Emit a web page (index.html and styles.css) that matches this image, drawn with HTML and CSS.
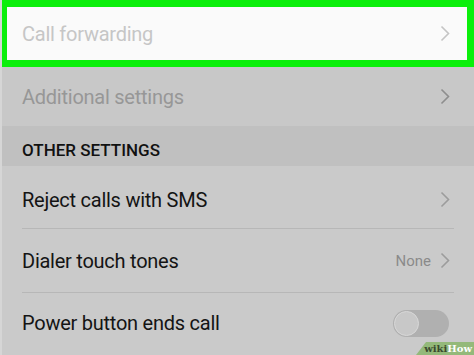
FILE: index.html
```html
<!DOCTYPE html>
<html>
<head>
<meta charset="utf-8">
<link rel="stylesheet" href="styles.css">
</head>
<body>
<div class="screen">
  <div class="row highlight">
    <span class="label faint">Call forwarding</span>
    <svg class="chev" width="10" height="17" viewBox="0 0 10 17"><polyline points="1.5,1.5 8.5,8.5 1.5,15.5" fill="none" stroke="#c4c4c4" stroke-width="1.6"/></svg>
  </div>
  <div class="row dim">
    <span class="label muted">Additional settings</span>
    <svg class="chev" width="10" height="17" viewBox="0 0 10 17"><polyline points="1.5,1.5 8.5,8.5 1.5,15.5" fill="none" stroke="#8e8e8e" stroke-width="1.6"/></svg>
  </div>
  <div class="section">OTHER SETTINGS</div>
  <div class="row item sep r1">
    <span class="label">Reject calls with SMS</span>
    <svg class="chev" width="10" height="17" viewBox="0 0 10 17"><polyline points="1.5,1.5 8.5,8.5 1.5,15.5" fill="none" stroke="#9c9c9c" stroke-width="1.6"/></svg>
  </div>
  <div class="row item sep r2">
    <span class="label">Dialer touch tones</span>
    <span class="value">None
      <svg class="chev" width="10" height="17" viewBox="0 0 10 17"><polyline points="1.5,1.5 8.5,8.5 1.5,15.5" fill="none" stroke="#9c9c9c" stroke-width="1.6"/></svg>
    </span>
  </div>
  <div class="row item r3">
    <span class="label">Power button ends call</span>
    <span class="toggle"><span class="knob"></span></span>
  </div>
  <div class="badge"><span class="wiki">wiki</span><span class="how">How</span></div>
</div>
</body>
</html>
```

FILE: styles.css
```css
html, body {
  margin: 0;
  padding: 0;
  background: #cacaca;
}
.screen {
  position: relative;
  width: 474px;
  height: 355px;
  overflow: hidden;
  font-family: Roboto, "Liberation Sans", sans-serif;
  background: #cacaca;
  border-left: 2px solid #d6d6d6;
  box-sizing: border-box;
}
.row {
  display: flex;
  align-items: center;
  justify-content: space-between;
  box-sizing: border-box;
}
.label {
  font-size: 20px;
  color: #141414;
  letter-spacing: -0.25px;
}
.highlight {
  margin-left: -2px;
  height: 67px;
  border: 7px solid #0bef0b;
  background: #fafafa;
  padding: 0 17px 0 15px;
}
.faint { color: #c6c6c6; }
.muted { color: #979797; }
.dim {
  height: 59px;
  background: #c8c8c8;
  padding: 0 24px 0 20px;
}
.section {
  height: 40px;
  background: #c0c0c0;
  padding-left: 20px;
  display: flex;
  align-items: center;
  padding-top: 7px;
  box-sizing: border-box;
  font-size: 17px;
  font-weight: 500;
  color: #111;
}
.item {
  margin: 0 20px 0 20px;
  padding-right: 4px;
  background: transparent;
}
.sep { border-bottom: 1px solid #b7b7b7; }
.r1 { height: 63px; padding-top: 5px; }
.r2 { height: 64px; padding-top: 0px; }
.r3 { height: 60px; padding-right: 4px; }
.chev { display: block; }
.value {
  display: flex;
  align-items: center;
  gap: 9px;
  font-size: 15px;
  color: #8a8a8a;
}
.toggle {
  position: relative;
  width: 56px;
  height: 27px;
  border-radius: 14px;
  background: #b0b0b0;
  margin-right: 1px;
}
.knob {
  position: absolute;
  left: 1px;
  top: 1px;
  width: 25px;
  height: 25px;
  box-sizing: border-box;
  border-radius: 50%;
  background: #c8c8c8;
  border: 1px solid #d8d8d8;
}
.badge {
  position: absolute;
  right: 0;
  bottom: 0;
  width: 58px;
  height: 13px;
  background: #94b97a;
  clip-path: polygon(10px 0, 100% 0, 100% 100%, 0 100%);
  font-family: "DejaVu Serif", "Liberation Serif", serif;
  font-weight: bold;
  font-size: 10px;
  line-height: 13px;
  text-align: right;
  padding-right: 2px;
  box-sizing: border-box;
}
.wiki { color: #3b4a2e; }
.how { color: #fff; }
```
